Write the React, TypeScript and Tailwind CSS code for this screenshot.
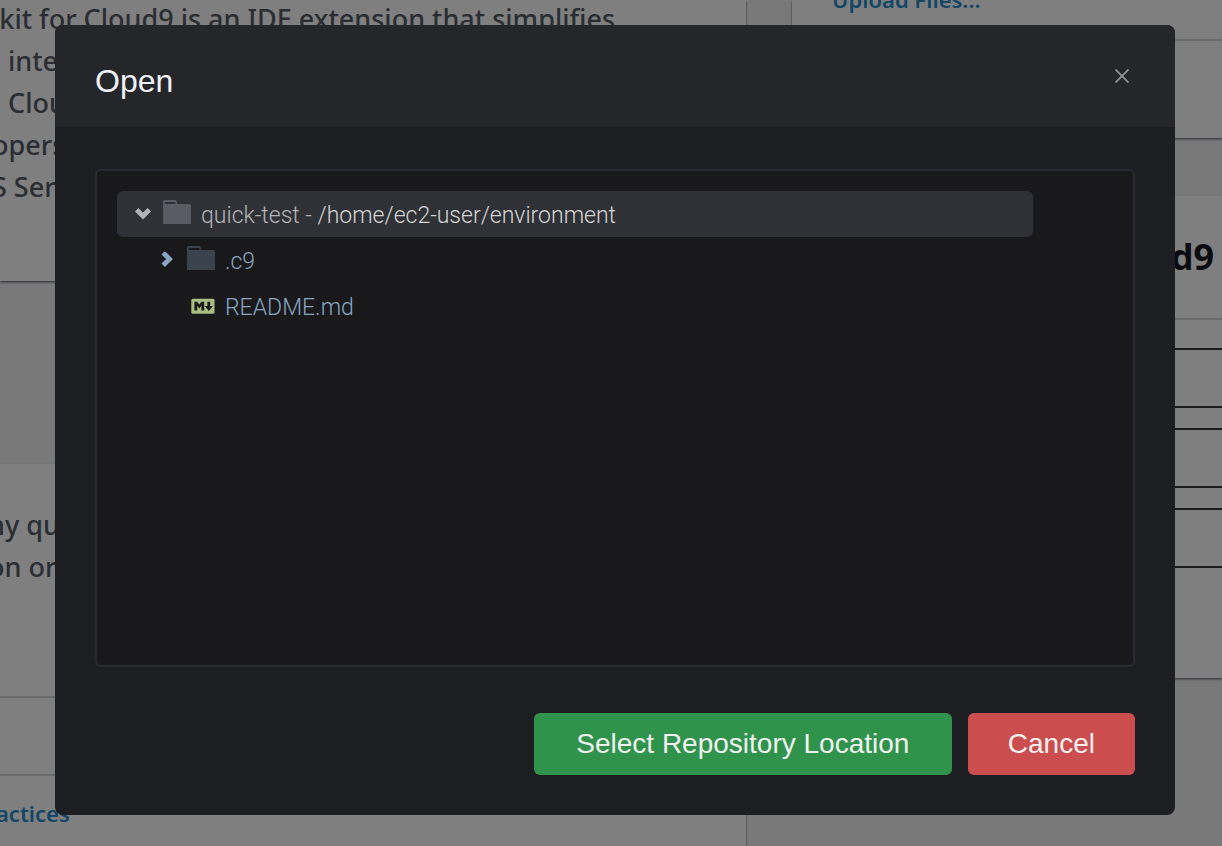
import React, { useState } from "react";
import { clsx } from "clsx";

const cardShadow =
  "shadow-[0_2px_2px_0_rgba(0,28,36,0.3),1px_1px_1px_0_rgba(0,28,36,0.15),-1px_1px_1px_0_rgba(0,28,36,0.15)]";

function Chevron({ open }: { open: boolean }) {
  return (
    <svg
      viewBox="0 0 16 16"
      className="h-4 w-4 shrink-0"
      fill="none"
      stroke="currentColor"
      strokeWidth="4.8"
    >
      <path d={open ? "M1.7 3.7L8 10L14.3 3.7" : "M4.2 0.7L10.5 7L4.2 13.3"} />
    </svg>
  );
}

function Folder() {
  return (
    <svg viewBox="0 0 28 28" className="h-7 w-7 shrink-0" fill="currentColor">
      <path
        fillRule="evenodd"
        d="M0 24V2Q0 0 2 0H12Q14 0 14 2V4H26Q28 4 28 6V24ZM2 2V4H12.4V2Z"
      />
    </svg>
  );
}

function Markdown() {
  return (
    <svg viewBox="0 0 28 28" className="h-7 w-7 shrink-0">
      <rect x="4.3" y="6.8" width="23.2" height="15" rx="1.5" fill="#a9bc82" />
      <path
        d="M7.4 18.6V9.8H10.2L12.3 12.5L14.4 9.8H17.2V18.6H14.4V13.8L12.3 16.5L10.2 13.8V18.6Z"
        fill="#19191b"
      />
      <path d="M20.4 9.8H23.2V14H25.8L21.8 19L17.8 14H20.4Z" fill="#19191b" />
    </svg>
  );
}

function TextLine({ children, indent }: { children: string; indent?: boolean }) {
  return (
    <span className={clsx("block whitespace-nowrap", indent && "pl-4")}>
      {children}
    </span>
  );
}

function Welcome() {
  return (
    <div className="grid min-h-screen grid-cols-[746fr_430fr] gap-[46px] text-[27px] leading-[42px] font-medium text-[#545b64]">
      <div className="flex min-w-0 flex-col gap-[181px]">
        <section className={clsx("bg-white pb-[73px]", cardShadow)}>
          <p className="-mt-0.5 -ml-2">
            <TextLine>lkit for Cloud9 is an IDE extension that simplifies</TextLine>
            <TextLine indent>inte</TextLine>
            <TextLine indent>Clou</TextLine>
            <TextLine>opers</TextLine>
            <TextLine>S Ser</TextLine>
          </p>
        </section>
        <section
          className={clsx(
            "flex flex-1 flex-col border-t-2 border-[#eaeded] bg-white",
            cardShadow
          )}
        >
          <p className="-ml-3 pt-10 pb-[108px]">
            <TextLine>ny qu</TextLine>
            <TextLine>on or</TextLine>
          </p>
          <div className="h-20 border-y-2 border-[#d5dbdb]" />
          <a href="#practices" className="-ml-1 py-4 text-[22px] font-semibold text-[#2a8ccc]">
            actices
          </a>
        </section>
      </div>

      <div className="flex min-w-0 flex-col gap-14">
        <section className={clsx("bg-white", cardShadow)}>
          <div className="-mt-[22px] border-b-2 border-[#d5dbdb] px-10 pb-[19px]">
            <a href="#upload" className="block text-[22px] font-semibold text-[#2a8ccc]">
              Upload Files...
            </a>
          </div>
          <div className="h-[97px]" />
        </section>
        <section
          className={clsx("border-t-2 border-[#eaeded] bg-white pb-[110px]", cardShadow)}
        >
          <h2 className="border-b-2 border-[#d5dbdb] py-10 pr-2 text-right text-[36px] font-bold text-[#16191f]">
            Cloud9
          </h2>
          <div className="flex flex-col gap-5 pt-7">
            <div className="h-[60px] border-y-2 border-[#38383f]" />
            <div className="h-[60px] border-y-2 border-[#38383f]" />
            <div className="h-[60px] border-y-2 border-[#38383f]" />
          </div>
        </section>
      </div>
    </div>
  );
}

function FileTree() {
  const [open, setOpen] = useState(true);
  const row = "flex h-[46px] w-full items-center rounded-md pl-[18px] text-left";

  return (
    <div className="min-h-[498px] rounded-md border-2 border-[#2a2b30] bg-[#19191b] py-5 pr-[100px] pl-5 font-['Roboto',sans-serif] text-[23px] font-light text-[#88a4c2]">
      <button
        type="button"
        aria-expanded={open}
        onClick={() => setOpen(!open)}
        className={clsx(row, "bg-[#303136] text-[#b2b3b8]")}
      >
        <Chevron open={open} />
        <span className="mr-2.5 ml-3 text-[#595c64]">
          <Folder />
        </span>
        <span className="pt-1 whitespace-pre">
          quick-test - <span className="text-[#d4d4d4]">/home/ec2-user/environment</span>
        </span>
      </button>
      {open && (
        <ul className="pl-6">
          <li>
            <button type="button" className={row}>
              <Chevron open={false} />
              <span className="mr-2.5 ml-3 text-[#3a434d]">
                <Folder />
              </span>
              <span className="pt-1">.c9</span>
            </button>
          </li>
          <li>
            <button type="button" className={row}>
              <span className="mr-2.5 ml-7">
                <Markdown />
              </span>
              <span className="pt-1">README.md</span>
            </button>
          </li>
        </ul>
      )}
    </div>
  );
}

function OpenDialog() {
  return (
    <div className="absolute inset-0 bg-black/50 pt-[25px] pr-[47px] pl-[55px]">
      <div
        role="dialog"
        aria-labelledby="dialog-title"
        className="overflow-hidden rounded-lg bg-[#1d1e22] font-['Liberation_Sans',Arial,sans-serif]"
      >
        <header className="flex items-start justify-between border-b border-[#1c1c20] bg-[#25262a] px-10 pt-9 pb-[26px]">
          <h1 id="dialog-title" className="text-[32px] leading-10 text-[#f0f0f8]">
            Open
          </h1>
          <button type="button" aria-label="Close" className="px-1.5 py-2 text-[#929295]">
            <svg viewBox="0 0 14 14" className="h-[14px] w-[14px]" stroke="currentColor" strokeWidth="1.8">
              <path d="M0.5 0.5L13.5 13.5M13.5 0.5L0.5 13.5" />
            </svg>
          </button>
        </header>
        <div className="px-10 pt-[41px] pb-10">
          <FileTree />
          <div className="mt-[46px] flex justify-end gap-4 text-[28px] leading-[62px] text-[#f0f0f0]">
            <button type="button" className="min-w-[418px] rounded-md bg-[#2f934b] px-10">
              Select Repository Location
            </button>
            <button type="button" className="rounded-md bg-[#cb4d4d] px-10">
              Cancel
            </button>
          </div>
        </div>
      </div>
    </div>
  );
}

export default function App() {
  return (
    <main className="relative min-h-screen overflow-hidden bg-[#f2f3f3] font-['Noto_Sans',sans-serif]">
      <Welcome />
      <OpenDialog />
    </main>
  );
}
